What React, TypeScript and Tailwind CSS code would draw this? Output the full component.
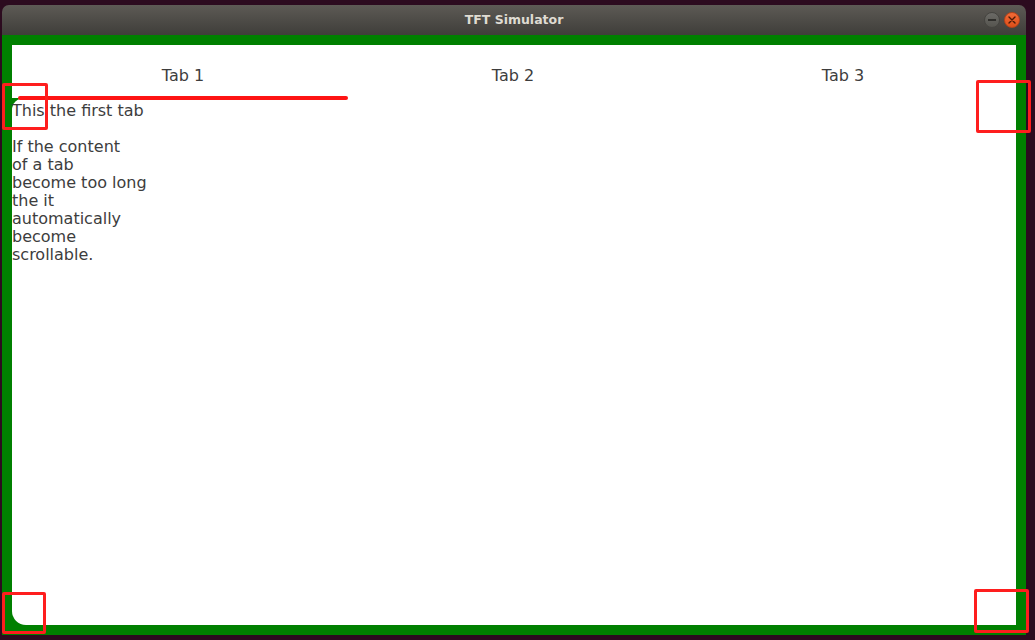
import React from "react";

const lines = [
  "This the first tab",
  "\u00a0",
  "If the content",
  "of a tab",
  "become too long",
  "the it",
  "automatically",
  "become",
  "scrollable.",
];

export default function App() {
  return (
    <div className="relative w-[1035px] h-[640px] overflow-hidden bg-[#2c0b1f]">
      <div className="ml-[2px] pt-[5px] w-[1024px] flex flex-col">
        {/* title bar */}
        <div className="relative h-[30px] rounded-t-[7px] bg-gradient-to-b from-[#5d5a55] to-[#3f3e3a] flex items-center justify-center">
          <span className="font-['DejaVu_Sans',sans-serif] font-bold text-[12.5px] text-[#dfdbd2] leading-none">
            TFT Simulator
          </span>
          <div className="absolute right-[6px] top-[7px] flex gap-[4px]">
            <div className="w-[16px] h-[16px] rounded-full bg-gradient-to-b from-[#6b6a66] to-[#56554f] border border-[#454440] flex items-center justify-center">
              <div className="w-[8px] h-[1.5px] bg-[#2f2e2b]" />
            </div>
            <div className="w-[16px] h-[16px] rounded-full bg-gradient-to-b from-[#f06a36] to-[#df4f18] border border-[#b8431a] flex items-center justify-center">
              <svg width="8" height="8" viewBox="0 0 8 8">
                <path d="M1 1L7 7M7 1L1 7" stroke="#4a1a08" strokeWidth="1.4" strokeLinecap="round" />
              </svg>
            </div>
          </div>
        </div>
        {/* green body */}
        <div className="h-[600px] bg-[#008000] p-[10px]">
          <div className="h-full flex flex-col font-['DejaVu_Sans',sans-serif] text-[16px] text-[#3d3d3d]">
            <div className="h-[53px] bg-white flex pl-[6px] items-start pt-[22px]">
              <div className="w-[330px] text-center leading-[18px]">Tab 1</div>
              <div className="w-[330px] text-center leading-[18px]">Tab 2</div>
              <div className="w-[330px] text-center leading-[18px]">Tab 3</div>
            </div>
            <div className="flex-1 bg-white rounded-tl-[12px] rounded-bl-[14px] pt-[4px] leading-[18px]">
              {lines.map((l, i) => (
                <div key={i}>{l}</div>
              ))}
            </div>
          </div>
        </div>
      </div>

      {/* red annotations */}
      <div className="absolute left-[18px] top-[96px] w-[330px] h-[4px] rounded-full bg-[#fe1414]" />
      <div className="absolute left-[2px] top-[83px] w-[46px] h-[47px] border-[3px] border-[#fe1e1e] rounded-[2px]" />
      <div className="absolute left-[976px] top-[80px] w-[55px] h-[53px] border-[3px] border-[#fe1e1e] rounded-[2px]" />
      <div className="absolute left-[2px] top-[592px] w-[44px] h-[42px] border-[3px] border-[#fe1e1e] rounded-[2px]" />
      <div className="absolute left-[974px] top-[589px] w-[55px] h-[44px] border-[3px] border-[#fe1e1e] rounded-[2px]" />
    </div>
  );
}
